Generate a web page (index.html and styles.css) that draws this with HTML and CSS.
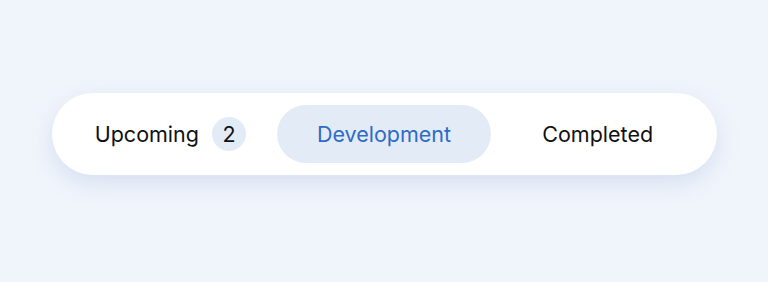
FILE: index.html
```html
<!DOCTYPE html>
<html lang="en">
<head>
    <meta charset="utf-8">
    <link rel="stylesheet" href="styles.css">
</head>
<body>
    <!--Tab bar-->
    <nav class="tabs">
        <a class="tab">
            <span>Upcoming</span>
            <span class="count">2</span>
        </a>
        <a class="tab active">
            <span>Development</span>
        </a>
        <a class="tab">
            <span>Completed</span>
        </a>
    </nav>
</body>
</html>
```

FILE: styles.css
```css
html, body {
    margin: 0;
    height: 100%;
}
body {
    background-color: #f0f4fb;
    font-family: Inter, "Noto Sans", sans-serif;
    display: flex;
    justify-content: center;
    align-items: flex-start;
    padding-top: 93px;
    box-sizing: border-box;
}
.tabs {
    width: 665px;
    box-sizing: border-box;
    padding: 12px;
    background-color: #ffffff;
    border-radius: 41px;
    display: grid;
    grid-template-columns: 1fr 1fr 1fr;
    box-shadow: 0 8px 20px rgba(170, 190, 225, 0.35);
}
.tab {
    height: 58px;
    display: flex;
    align-items: center;
    justify-content: center;
    gap: 13px;
    border-radius: 29px;
    font-size: 21.5px;
    color: #111111;
    cursor: pointer;
}
.tab.active {
    background-color: #e3ebf7;
    color: #2f6bc4;
}
.count {
    width: 34px;
    height: 34px;
    border-radius: 50%;
    background-color: #e3ebf7;
    display: flex;
    align-items: center;
    justify-content: center;
}
```
